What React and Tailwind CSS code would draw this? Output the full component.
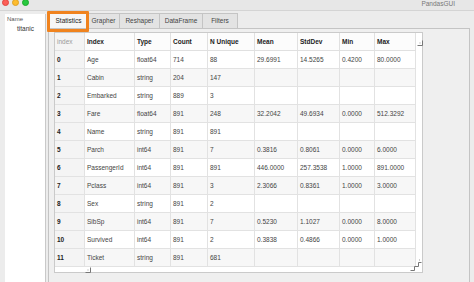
import React from "react";

const rows = [
  ["0", "Age", "float64", "714", "88", "29.6991", "14.5265", "0.4200", "80.0000"],
  ["1", "Cabin", "string", "204", "147", "", "", "", ""],
  ["2", "Embarked", "string", "889", "3", "", "", "", ""],
  ["3", "Fare", "float64", "891", "248", "32.2042", "49.6934", "0.0000", "512.3292"],
  ["4", "Name", "string", "891", "891", "", "", "", ""],
  ["5", "Parch", "int64", "891", "7", "0.3816", "0.8061", "0.0000", "6.0000"],
  ["6", "PassengerId", "int64", "891", "891", "446.0000", "257.3538", "1.0000", "891.0000"],
  ["7", "Pclass", "int64", "891", "3", "2.3066", "0.8361", "1.0000", "3.0000"],
  ["8", "Sex", "string", "891", "2", "", "", "", ""],
  ["9", "SibSp", "int64", "891", "7", "0.5230", "1.1027", "0.0000", "8.0000"],
  ["10", "Survived", "int64", "891", "2", "0.3838", "0.4866", "0.0000", "1.0000"],
  ["11", "Ticket", "string", "891", "681", "", "", "", ""],
];

const headers = ["index", "Index", "Type", "Count", "N Unique", "Mean", "StdDev", "Min", "Max"];

const tabs = [
  { name: "Statistics", w: "w-[39px]", active: true },
  { name: "Grapher", w: "w-[33px]" },
  { name: "Reshaper", w: "w-[41px]" },
  { name: "DataFrame", w: "w-[44px]" },
  { name: "Filters", w: "w-[36px]" },
];

function Grip() {
  return (
    <svg width="6" height="6" viewBox="0 0 6 6">
      <path d="M0.5 5.5 H5.5 V0.5" stroke="#777" strokeWidth="1" fill="none" />
      <rect x="2.5" y="2.5" width="1" height="1" fill="#999" />
    </svg>
  );
}

export default function App() {
  return (
    <div
      className="relative w-[474px] h-[282px] overflow-hidden bg-[#ececec] text-[#333]"
      style={{ fontFamily: '"Liberation Sans", Arial, sans-serif' }}
    >
      {/* title bar */}
      <div className="h-[11px] bg-[#e7e7e7] border-b border-[#d4d4d4] flex items-start justify-between">
        <div className="flex gap-[3px] pl-[2px] -mt-[1px]">
          <div className="w-[7px] h-[7px] rounded-full bg-[#fc5f57] border border-[#e0443e]" />
          <div className="w-[7px] h-[7px] rounded-full bg-[#fdbc2e] border border-[#dea123]" />
          <div className="w-[7px] h-[7px] rounded-full bg-[#28c840] border border-[#1aab29]" />
        </div>
        <div className="text-[6.5px] text-[#777] pr-[19px] pt-[0px] leading-[8px]">PandasGUI</div>
      </div>

      <div className="flex h-[271px]">
        {/* left panel */}
        <div className="ml-[5px] mt-[3px] w-[41px] bg-white border-r border-[#c9c9c9] flex flex-col">
          <div className="text-[6px] text-[#555] pl-[2px] pt-[2px] leading-[7px]">Name</div>
          <div className="text-[6.5px] text-[#333] pl-[12px] pt-[2px] leading-[8px]">titanic</div>
        </div>
        <div className="w-[2px]" />

        {/* tab widget */}
        <div className="flex flex-col w-[422px] pt-[2px]">
          <div className="flex h-[15px] pl-[1px]">
            {tabs.map((t) => (
              <div
                key={t.name}
                className={`${t.w} h-[15px] flex items-center justify-center text-[6.5px] border-t border-l border-r border-[#c4c4c4] -mr-[1px] ${
                  t.active ? "bg-[#f6f6f6] text-[#222]" : "bg-[#e3e3e3] text-[#444]"
                }`}
              >
                {t.name}
              </div>
            ))}
          </div>
          <div className="flex-1 border-l border-t border-r border-[#c4c4c4] bg-[#efefef] pt-[3px] pl-[5px] flex">
            {/* table */}
            <div className="relative w-[369px] h-[241px] bg-white border border-[#cacaca]">
              <div className="grid grid-cols-[30px_50px_36px_37px_47px_43px_42px_35px_41px] w-[361px]">
                {headers.map((h, i) => (
                  <div
                    key={h}
                    className={`h-[18px] flex items-center px-[2px] text-[6.5px] border-r border-b border-[#e0e0e0] ${
                      i === 0 ? "bg-[#f4f4f4] text-[#999] font-normal" : "bg-[#fcfcfc] text-[#222] font-bold"
                    }`}
                  >
                    {h}
                  </div>
                ))}
                {rows.map((r, ri) =>
                  r.map((c, ci) => (
                    <div
                      key={ri + "-" + ci}
                      className={`h-[18px] flex items-center px-[2px] text-[6.5px] border-r border-b border-[#e2e2e2] ${
                        ci === 0
                          ? "bg-[#f4f4f4] font-bold text-[#222]"
                          : ri % 2 === 1
                          ? "bg-[#f7f7f7] text-[#444]"
                          : "bg-white text-[#444]"
                      }`}
                    >
                      {c}
                    </div>
                  ))
                )}
              </div>
              {/* header grips */}
              <div className="absolute left-[362px] top-[7px]">
                <Grip />
              </div>
              <div className="absolute left-[30px] top-[234px]">
                <Grip />
              </div>
              {/* resize grip bottom right */}
              <svg className="absolute left-[355px] top-[226px]" width="12" height="12" viewBox="0 0 12 12">
                <path d="M0.5 11.5 H4.5 V7.5 H8.5 V3.5 H11.5" stroke="#777" strokeWidth="1" fill="none" />
                <rect x="9" y="0.5" width="1" height="1" fill="#999" />
              </svg>
            </div>
          </div>
        </div>
      </div>

      {/* orange highlight */}
      <div className="absolute left-[47px] top-[11px] w-[42px] h-[21px] border-[3px] border-[#f0831e] rounded-[1px] pointer-events-none" />
    </div>
  );
}
